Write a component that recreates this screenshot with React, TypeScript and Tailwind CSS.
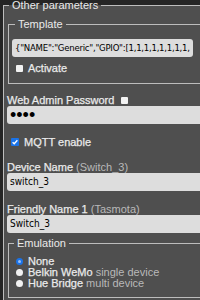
import React from 'react';

const Check: React.FC<{ checked?: boolean }> = ({ checked }) =>
  checked ? (
    <span className="inline-flex w-[8px] h-[8px] shrink-0 items-center justify-center rounded-[1px] bg-[#1a73e8]">
      <svg viewBox="0 0 8 8" className="w-[8px] h-[8px]">
        <path d="M1.6 4.2 L3.2 5.8 L6.4 2.2" fill="none" stroke="#fff" strokeWidth="1.3" />
      </svg>
    </span>
  ) : (
    <span className="inline-block w-[7px] h-[7px] shrink-0 rounded-[1px] bg-[#f2f2f2]" />
  );

const Radio: React.FC<{ checked?: boolean }> = ({ checked }) =>
  checked ? (
    <span className="inline-flex w-[7px] h-[7px] shrink-0 items-center justify-center rounded-full bg-[#1a73e8]">
      <span className="w-[3px] h-[3px] rounded-full bg-[#9cc0f5]" />
    </span>
  ) : (
    <span className="inline-block w-[7px] h-[7px] shrink-0 rounded-full bg-[#f2f2f2]" />
  );

const inputCls =
  "block h-[18px] rounded-[3px] bg-[#dddddd] px-[3px] py-0 leading-[18px] text-black outline-none font-['DejaVu_Sans_Condensed','DejaVu_Sans',sans-serif] font-stretch-condensed";

// labels that are <b> on the device page
const b = "[-webkit-text-stroke:0.25px_#eaeaea]";

export default function App() {
  return (
    <div className="w-[200px] h-[300px] overflow-hidden bg-[#252525] text-[11px] text-[#eaeaea] font-['Liberation_Sans',Arial,sans-serif]">
      {/* Other parameters */}
      <fieldset className="-mt-[2px] ml-[3px] w-[260px] border border-[#bdbdbd] bg-[#4f4f4f] px-[3px] pb-2">
        <legend className="ml-[2px] px-[3px] leading-[14px]">Other parameters</legend>

        <fieldset className="mt-[5px] ml-[1px] border border-[#bdbdbd] px-[3px] pb-[8px]">
          <legend className="ml-[3px] px-[3px] leading-[14px]">Template</legend>
          <input
            readOnly
            value='{"NAME":"Generic","GPIO":[1,1,1,1,1,1,1,1,1,1,1,1,1],"FLAG":0,"BASE":18}'
            className={`${inputCls} mt-[8px] w-[181px] text-[9.5px] tracking-[-0.25px]`}
          />
          <div className="mt-[4px] flex items-center gap-[5px] pl-[4px] leading-[14px]">
            <Check />
            <span className={b}>Activate</span>
          </div>
        </fieldset>

        <div className="mt-[10px] flex items-center gap-[7px] leading-[12px]">
          <span className={b}>Web Admin Password</span>
          <Check />
        </div>
        <input
          readOnly
          value="••••"
          className="block h-[18px] w-full rounded-[3px] bg-[#dddddd] px-[3px] py-0 text-[18px] leading-[18px] text-black outline-none font-['Liberation_Sans',Arial,sans-serif]"
        />

        <div className="mt-[11px] flex items-center gap-[5px] pl-[4px] leading-[14px]">
          <Check checked />
          <span className={b}>MQTT enable</span>
        </div>

        <div className="mt-[12px] leading-[12px]">
          <span className={b}>Device Name</span> <span className="text-[#b9b9b9]">(Switch_3)</span>
        </div>
        <input readOnly value="switch_3" className={`${inputCls} w-full text-[10px]`} />

        <div className="mt-[12px] leading-[12px]">
          <span className={b}>Friendly Name 1</span> <span className="text-[#b9b9b9]">(Tasmota)</span>
        </div>
        <input readOnly value="Switch_3" className={`${inputCls} w-full text-[10px]`} />

        <fieldset className="mt-[3px] ml-[1px] border border-[#bdbdbd] px-[3px] pb-[8px]">
          <legend className="ml-[2px] px-[3px] leading-[14px]">Emulation</legend>
          <div className="mt-[6px] pl-[4px]">
            <div className="flex items-center gap-[5px] leading-[11px]">
              <Radio checked />
              <span className={b}>None</span>
            </div>
            <div className="flex items-center gap-[5px] leading-[11px]">
              <Radio />
              <span>
                <span className={b}>Belkin WeMo</span> <span className="text-[#b9b9b9]">single device</span>
              </span>
            </div>
            <div className="flex items-center gap-[5px] leading-[11px]">
              <Radio />
              <span>
                <span className={b}>Hue Bridge</span> <span className="text-[#b9b9b9]">multi device</span>
              </span>
            </div>
          </div>
        </fieldset>
      </fieldset>
    </div>
  );
}
